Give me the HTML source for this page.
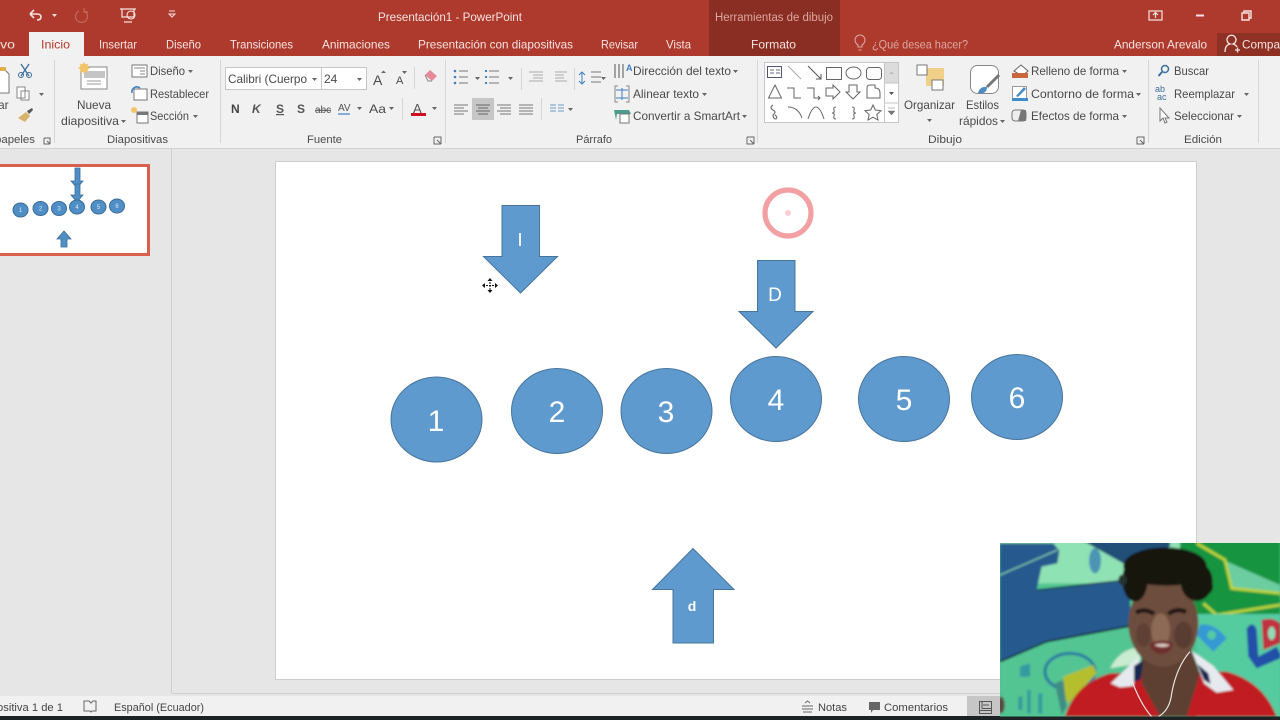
<!DOCTYPE html>
<html lang="es"><head><meta charset="utf-8"><title>Presentación1 - PowerPoint</title>
<style>
html,body{margin:0;padding:0;width:1280px;height:720px;overflow:hidden;background:#e6e6e6}
svg{display:block;font-family:"Liberation Sans",sans-serif;filter:blur(.3px)}
.t{font-size:12px;fill:#4a4a4a}
.w{font-size:12px;fill:#f6e3e0}
.i{fill:none;stroke:#666;stroke-width:1}
.c{fill:#4f8fc6;stroke:#3b6c96;stroke-width:1}
.n{fill:#fff;text-anchor:middle}
</style></head><body>
<svg width="1280" height="720" viewBox="0 0 1280 720" xmlns="http://www.w3.org/2000/svg">
<defs><filter id="b" x="-20%" y="-20%" width="140%" height="140%"><feGaussianBlur stdDeviation="3"/></filter><filter id="b2"><feGaussianBlur stdDeviation="0.35"/></filter></defs>
<!-- title bar -->
<rect width="1280" height="56" fill="#ad3a2d"/>
<rect x="709" width="131" height="56" fill="#8a2e23"/>
<rect x="1217" y="33" width="63" height="23" fill="#8e3024"/>
<rect x="29" y="32" width="55" height="24" fill="#f1f1f1"/>
<g fill="none" stroke="#f6e3e0" stroke-width="1.6">
<path d="M30 14 L34 10 M30 14 L34 18 M30 14 H37 Q41 14 41 17 Q41 20 37 20"/>
<path d="M52 14h5l-2.500 3z" fill="#f6e3e0" stroke="none"/>
<path d="M79 11 A6 6 0 1 0 84 11 M84 8 V12 H88" stroke="#c4685c" stroke-width="1.2"/>
<path d="M120 9 H136 M122 9 V17 H134 V9 M124 22 H132" stroke-width="1.2"/>
<circle cx="131" cy="15" r="4" stroke-width="1.1"/>
<path d="M169 11h6 M169 14h6l-3 3z" stroke-width="1"/>
<path d="M1149 11h13v9h-13z M1155.500 18v-5 M1153 15l2.500-2.500 2.500 2.500" stroke-width="1.2"/>
<path d="M1196 15.500h8" stroke-width="2"/>
<path d="M1242 13h7v7h-7z M1244 13v-2h7v7h-2" stroke-width="1.400"/>
</g>
<text x="378" y="21" class="w" textLength="144" lengthAdjust="spacingAndGlyphs">Presentación1 - PowerPoint</text>
<text x="715" y="21" font-size="11.500" fill="#dca79f" textLength="118" lengthAdjust="spacingAndGlyphs">Herramientas de dibujo</text>
<g class="w">
<text x="-3" y="48.500" textLength="18" lengthAdjust="spacingAndGlyphs">ivo</text>
<text x="99" y="48.500" textLength="38" lengthAdjust="spacingAndGlyphs">Insertar</text>
<text x="166" y="48.500" textLength="35" lengthAdjust="spacingAndGlyphs">Diseño</text>
<text x="230" y="48.500" textLength="63" lengthAdjust="spacingAndGlyphs">Transiciones</text>
<text x="322" y="48.500" textLength="68" lengthAdjust="spacingAndGlyphs">Animaciones</text>
<text x="418" y="48.500" textLength="155" lengthAdjust="spacingAndGlyphs">Presentación con diapositivas</text>
<text x="601" y="48.500" textLength="37" lengthAdjust="spacingAndGlyphs">Revisar</text>
<text x="666" y="48.500" textLength="25" lengthAdjust="spacingAndGlyphs">Vista</text>
<text x="751" y="48.500" textLength="45" lengthAdjust="spacingAndGlyphs">Formato</text>
<text x="1114" y="48.500" textLength="93" lengthAdjust="spacingAndGlyphs">Anderson Arevalo</text>
<text x="1242" y="48.500" textLength="38" lengthAdjust="spacingAndGlyphs">Compa</text>
</g>
<text x="41" y="48.500" font-size="12" fill="#b5392c" textLength="29" lengthAdjust="spacingAndGlyphs">Inicio</text>
<text x="872" y="48.500" font-size="12" fill="#dca79f" textLength="96" lengthAdjust="spacingAndGlyphs">¿Qué desea hacer?</text>
<path d="M858 47 V45 Q855 43 855 40 A5 5 0 0 1 865 40 Q865 43 862 45 V47 Z M858.500 50h3" fill="none" stroke="#dca79f" stroke-width="1.1"/>
<path d="M1225 52 Q1225 45 1230 44 A4.500 4.500 0 1 1 1233 44 Q1236 45 1237 47 M1235 50h5 M1237.500 47.500v5" fill="none" stroke="#f6e3e0" stroke-width="1.3"/>

<!-- ribbon -->
<rect y="56" width="1280" height="92" fill="#f1f1f1"/>
<rect y="148" width="1280" height="1" fill="#d2d2d2"/>
<g fill="#d6d6d6">
<rect x="54" y="60" width="1" height="83"/><rect x="220" y="60" width="1" height="83"/><rect x="445" y="60" width="1" height="83"/>
<rect x="757" y="60" width="1" height="83"/><rect x="1148" y="60" width="1" height="83"/><rect x="1258" y="60" width="1" height="83"/>
<rect x="521" y="68" width="1" height="22"/><rect x="574" y="68" width="1" height="22"/><rect x="414" y="67" width="1" height="22"/><rect x="402" y="98" width="1" height="22"/><rect x="541" y="98" width="1" height="22"/>
</g>
<!-- clipboard -->
<path d="M-1 70 H5 L9 74 V93 H-1" fill="#fff" stroke="#777"/><rect x="0" y="67" width="6" height="4" fill="#e0b050"/>
<path d="M21 64 L29 76 M29 64 L21 76" stroke="#3d6f9e" stroke-width="1.300"/><circle cx="21" cy="75" r="2.500" fill="none" stroke="#3d6f9e"/><circle cx="29" cy="75" r="2.500" fill="none" stroke="#3d6f9e"/>
<path d="M17 87h8v11h-8z M21 91h8v9h-8z" fill="#fff" stroke="#888"/><path d="M39 93h5l-2.500 3z" fill="#666"/>
<path d="M18 118 L26 112 L30 116 L25 122 Z" fill="#d9b36c"/><path d="M27 111l5-3 1 2-4 4z" fill="#555"/>
<text x="-2" y="109" class="t">ar</text>
<text x="-5" y="143" class="t" textLength="40" lengthAdjust="spacingAndGlyphs" style="font-size:11px">papeles</text>
<path d="M44 138h6v6 M44 138v6h6 M47 141l3 3" class="i" stroke-width=".8"/>
<!-- diapositivas -->
<rect x="81" y="67" width="26" height="22" fill="#fff" stroke="#888"/><rect x="84" y="71" width="21" height="7" fill="#c4c4c4"/>
<path d="M87 81h14M87 84h14" stroke="#999"/>
<circle cx="84" cy="68" r="4.500" fill="#f2c468"/><path d="M78 68h12M84 62v12M80 64l8 8M88 64l-8 8" stroke="#f2c468"/>
<text x="77" y="109" class="t" textLength="34" lengthAdjust="spacingAndGlyphs">Nueva</text>
<text x="61" y="125" class="t" textLength="58" lengthAdjust="spacingAndGlyphs">diapositiva</text>
<path d="M121 120h5l-2.500 3z" fill="#666"/>
<rect x="132" y="65" width="15" height="12" fill="#fff" stroke="#777"/><path d="M134 68h11M140 71h5M140 74h5" stroke="#888"/>
<text x="150" y="75" class="t" textLength="35" lengthAdjust="spacingAndGlyphs">Diseño</text><path d="M188 70h5l-2.500 3z" fill="#666"/>
<rect x="134" y="89" width="13" height="11" fill="#fff" stroke="#777"/><path d="M132 93 A5 5 0 0 1 140 88" fill="none" stroke="#3d7fbf" stroke-width="1.500"/>
<text x="150" y="98" class="t" textLength="59" lengthAdjust="spacingAndGlyphs">Restablecer</text>
<rect x="137" y="112" width="11" height="11" fill="#fff" stroke="#777"/><rect x="137" y="112" width="11" height="3" fill="#777"/><circle cx="134" cy="110" r="3" fill="#f2c468"/>
<text x="150" y="120" class="t" textLength="39" lengthAdjust="spacingAndGlyphs">Sección</text><path d="M193 115h5l-2.500 3z" fill="#666"/>
<text x="107" y="143" class="t" style="font-size:11px" textLength="61" lengthAdjust="spacingAndGlyphs">Diapositivas</text>
<!-- fuente -->
<rect x="225.500" y="67.500" width="141" height="22" fill="#fff" stroke="#c6c6c6"/><path d="M321.500 68v21" stroke="#c6c6c6"/>
<text x="228" y="83" class="t" textLength="79" lengthAdjust="spacingAndGlyphs">Calibri (Cuerpo</text><path d="M312 78h5l-2.500 3z" fill="#666"/>
<text x="324" y="83" class="t">24</text><path d="M357 78h5l-2.500 3z" fill="#666"/>
<text x="373" y="85" class="t" style="font-size:14px">A</text><path d="M381 73l2.500-2.500 2.500 2.500z" fill="#666"/>
<text x="396" y="84" class="t" style="font-size:11px">A</text><path d="M402 71h5l-2.500 3z" fill="#666"/>
<path d="M425 75l5-5 7 6-5 5z" fill="#e58a98"/><path d="M425 75l3 6 4 0" fill="none" stroke="#888"/>
<text x="231" y="113" style="font-size:12px;font-weight:700" fill="#444">N</text>
<text x="252" y="113" style="font-size:12px;font-weight:700;font-style:italic" fill="#555">K</text>
<text x="276" y="113" style="font-size:12px;font-weight:700;text-decoration:underline" fill="#555">S</text>
<text x="297" y="113" style="font-size:12px;font-weight:700" fill="#555">S</text>
<text x="315" y="113" style="font-size:10px;text-decoration:line-through" fill="#555">abc</text>
<text x="338" y="111" style="font-size:10px" fill="#555">AV</text><path d="M338 114h12" stroke="#3d7fbf" stroke-width="1.200"/><path d="M357 107h5l-2.500 3z" fill="#666"/>
<text x="369" y="113" class="t" textLength="17" lengthAdjust="spacingAndGlyphs">Aa</text><path d="M389 107h5l-2.500 3z" fill="#666"/>
<text x="413" y="113" style="font-size:13px" fill="#555">A</text><rect x="411" y="113" width="15" height="3" fill="#d01020"/><path d="M432 107h5l-2.500 3z" fill="#666"/>
<text x="307" y="143" class="t" style="font-size:11px" textLength="35" lengthAdjust="spacingAndGlyphs">Fuente</text>
<path d="M434 137h7v7 M434 137v7h7 M437 140l4 4" class="i" stroke-width=".8"/>
<!-- parrafo -->
<g stroke="#777">
<path d="M459 71h9M459 77h9M459 83h9M489 71h10M489 77h10M489 83h10"/>
<path d="M529 72h14M533 75h10M533 78h10M529 81h14M555 72h12M555 75h9M555 78h9M555 81h12" stroke="#aaa"/>
<path d="M591 72h10M591 77h10M591 82h10"/>
<path d="M454 105h14M454 108h10M454 111h14M454 114h10"/>
<path d="M497 105h14M500 108h11M497 111h14M500 114h11"/>
<path d="M519 105h14M519 108h14M519 111h14M519 114h14"/>
</g>
<rect x="472" y="98" width="22" height="22" fill="#c6c6c6"/>
<path d="M476 105h14M478 108h10M476 111h14M478 114h10" stroke="#666"/>
<g fill="#3d7fbf"><circle cx="455" cy="71" r="1.300"/><circle cx="455" cy="77" r="1.300"/><circle cx="455" cy="83" r="1.300"/><rect x="485" y="70" width="2" height="2"/><rect x="485" y="76" width="2" height="2"/><rect x="485" y="82" width="2" height="2"/></g>
<path d="M582 72v12M579 75l3-3 3 3M579 81l3 3 3-3" fill="none" stroke="#3d7fbf"/>
<g fill="#666"><path d="M475 77h5l-2.500 3zM508 77h5l-2.500 3zM601 77h5l-2.500 3zM568 108h5l-2.500 3z"/></g>
<path d="M550 105h6M550 108h6M550 111h6M558 105h6M558 108h6M558 111h6" stroke="#6a9ac9"/>
<path d="M615 64v14M619 64v14M623 64v14" stroke="#555"/><text x="626" y="71" style="font-size:9px;font-weight:700" fill="#3d7fbf">A</text>
<text x="633" y="75" class="t" textLength="98" lengthAdjust="spacingAndGlyphs">Dirección del texto</text><path d="M733 70h5l-2.500 3z" fill="#666"/>
<path d="M618 86h-3v16h3M626 86h3v16h-3" fill="none" stroke="#888"/><path d="M616 90h12M616 98h12M622 88v12" stroke="#3d7fbf"/>
<text x="633" y="98" class="t" textLength="66" lengthAdjust="spacingAndGlyphs">Alinear texto</text><path d="M702 93h5l-2.500 3z" fill="#666"/>
<path d="M614 110h15l2 4h-14l-1 6z" fill="#4f9c8c"/><rect x="620" y="114" width="9" height="9" fill="#fff" stroke="#777"/>
<text x="633" y="120" class="t" textLength="107" lengthAdjust="spacingAndGlyphs">Convertir a SmartArt</text><path d="M742 115h5l-2.500 3z" fill="#666"/>
<text x="576" y="143" class="t" style="font-size:11px" textLength="36" lengthAdjust="spacingAndGlyphs">Párrafo</text>
<path d="M747 137h7v7 M747 137v7h7 M750 140l4 4" class="i" stroke-width=".8"/>
<!-- shapes gallery -->
<rect x="764.500" y="62.500" width="134" height="60" fill="#fff" stroke="#c6c6c6"/>
<rect x="884" y="63" width="14" height="20" fill="#dcdcdc"/><path d="M884.500 63v59M884 83h14M884 103h14" stroke="#c6c6c6"/>
<path d="M889 74l2.500-2.500 2.500 2.500z" fill="#bbb"/><path d="M889 92h5l-2.500 3z" fill="#555"/><path d="M888 108h7M888 111h7l-3.500 4z" fill="#777" stroke="#777" stroke-width=".5"/>
<g fill="none" stroke="#666" stroke-width="1">
<rect x="767.500" y="66.500" width="14" height="11" stroke="#557"/><path d="M770 70h4M770 73h4M776 70h4M776 73h4" stroke="#668"/>
<path d="M788 66l13 13" stroke="#aaa"/><path d="M808 66l13 13M821 74v5h-5" stroke="#555"/>
<rect x="826.500" y="67.500" width="15" height="12"/><ellipse cx="853.500" cy="73" rx="7.500" ry="6"/><rect x="866.500" y="67.500" width="15" height="12" rx="3"/>
<path d="M775 85l6.500 13h-13z"/><path d="M787 88h7v10h7"/><path d="M807 88h7v10h6M818 96l2 2-2 2"/>
<path d="M826 88h7v-3l7 7-7 7v-3h-7z"/><path d="M849 85h8v7h3l-7 7-7-7h3z"/><path d="M867 98V88q0-3 3-3h5v3q5 0 5 5v5z"/>
<path d="M773 105q-4 3 0 5t0 5q0 4 3 4q2-2-1-4" stroke-width="1.100"/><path d="M788 107q10 0 14 11"/><path d="M808 119q4-12 8-12t8 12"/>
<path d="M836 107q-3 0-2 3t-2 3q3 0 2 3t2 3" stroke-width="1.100"/><path d="M852 107q3 0 2 3t2 3q-3 0-2 3t-2 3" stroke-width="1.100"/>
<path d="M873 105l2.300 5 5.700 .7-4.200 3.800 1.200 5.500-5-2.800-5 2.800 1.200-5.500-4.200-3.800 5.700-.7z"/>
</g>
<!-- organizar etc -->
<rect x="926" y="68" width="18" height="18" fill="#f0cf88"/><rect x="917" y="65" width="10" height="10" fill="#fff" stroke="#777"/><rect x="932" y="80" width="11" height="10" fill="#fff" stroke="#777"/>
<text x="904" y="109" class="t" textLength="51" lengthAdjust="spacingAndGlyphs">Organizar</text><path d="M927 119h5l-2.500 3z" fill="#666"/>
<rect x="970.500" y="65.500" width="28" height="28" rx="7" fill="#fff" stroke="#888"/><path d="M999 75 L987 87" stroke="#777" stroke-width="3"/><path d="M978 93q2-7 9-6q0 5-4 6z" fill="#4a8cc4"/>
<text x="966" y="109" class="t" textLength="33" lengthAdjust="spacingAndGlyphs">Estilos</text>
<text x="959" y="125" class="t" textLength="39" lengthAdjust="spacingAndGlyphs">rápidos</text><path d="M1000 120h5l-2.500 3z" fill="#666"/>
<path d="M1014 71l7-6 7 6-6 5z" fill="#fff" stroke="#666"/><rect x="1012" y="73" width="16" height="5" fill="#c8683c"/>
<text x="1031" y="75" class="t" textLength="88" lengthAdjust="spacingAndGlyphs">Relleno de forma</text><path d="M1122 70h5l-2.500 3z" fill="#666"/>
<path d="M1012.500 86.500h14v13h-14z" fill="#fff" stroke="#999"/><path d="M1016 96l8-9 2 2-8 8z" fill="#4a8cc4"/><rect x="1012" y="98" width="16" height="3" fill="#3d8ccc"/>
<text x="1031" y="98" class="t" textLength="103" lengthAdjust="spacingAndGlyphs">Contorno de forma</text><path d="M1136 93h5l-2.500 3z" fill="#666"/>
<rect x="1012" y="110" width="14" height="11" rx="3" fill="#eee" stroke="#777"/><path d="M1021 110h5v11h-8z" fill="#777"/>
<text x="1031" y="120" class="t" textLength="88" lengthAdjust="spacingAndGlyphs">Efectos de forma</text><path d="M1122 115h5l-2.500 3z" fill="#666"/>
<text x="928" y="143" class="t" style="font-size:11px" textLength="34" lengthAdjust="spacingAndGlyphs">Dibujo</text>
<path d="M1137 137h7v7 M1137 137v7h7 M1140 140l4 4" class="i" stroke-width=".8"/>
<!-- edicion -->
<circle cx="1165" cy="69" r="3.500" fill="none" stroke="#3d6f9e" stroke-width="1.500"/><path d="M1162 72l-3.500 4" stroke="#3d6f9e" stroke-width="2"/>
<text x="1174" y="75" class="t" textLength="35" lengthAdjust="spacingAndGlyphs">Buscar</text>
<text x="1155" y="92" style="font-size:9px" fill="#3d6f9e">ab</text><text x="1157" y="100" style="font-size:9px" fill="#3d6f9e">ac</text>
<text x="1174" y="98" class="t" textLength="61" lengthAdjust="spacingAndGlyphs">Reemplazar</text><path d="M1244 93h5l-2.500 3z" fill="#666"/>
<path d="M1160 108v13l3-3 2 5 2-1-2-4h4z" fill="#fff" stroke="#777"/>
<text x="1174" y="120" class="t" textLength="60" lengthAdjust="spacingAndGlyphs">Seleccionar</text><path d="M1237 115h5l-2.500 3z" fill="#666"/>
<text x="1184" y="143" class="t" style="font-size:11px" textLength="38" lengthAdjust="spacingAndGlyphs">Edición</text>

<!-- workspace -->
<rect y="149" width="1280" height="547" fill="#e6e6e6"/>
<rect x="171" y="149" width="1" height="544" fill="#cfcfcf"/>
<rect x="172" y="693" width="830" height="1" fill="#cfcfcf"/>
<!-- thumbnail -->
<rect x="-4" y="165.500" width="152.500" height="89" fill="#fff" stroke="#d9604d" stroke-width="3"/>
<g filter="url(#b2)">
<path d="M75 168h5v13h3l-6 7-6-7h4z" fill="#4f8fc6" stroke="#3b6c96" stroke-width=".8"/>
<path d="M75 184h5v11h3l-6 7-6-7h4z" fill="#4f8fc6" stroke="#3b6c96" stroke-width=".8"/>
<path d="M64 231l7 8h-4v8h-6v-8h-4z" fill="#4f8fc6" stroke="#3b6c96" stroke-width=".8"/>
<ellipse class="c" cx="20.500" cy="210" rx="7.500" ry="7"/><ellipse class="c" cx="40.500" cy="208.500" rx="7.500" ry="7"/><ellipse class="c" cx="59" cy="208.500" rx="7.500" ry="7"/><ellipse class="c" cx="77" cy="207" rx="7.500" ry="7"/><ellipse class="c" cx="98.500" cy="207" rx="7.500" ry="7"/><ellipse class="c" cx="117" cy="206" rx="7.500" ry="7"/>
<g fill="#dbe9f6" font-size="6" text-anchor="middle"><text x="20.500" y="212">1</text><text x="40.500" y="210.500">2</text><text x="59" y="210.500">3</text><text x="77" y="209">4</text><text x="98.500" y="209">5</text><text x="117" y="208">6</text></g>
</g>
<!-- slide -->
<rect x="275.500" y="161.500" width="921" height="518" fill="#fff" stroke="#cdcdcd"/>
<g fill="#5e9acd" stroke="#47749c" stroke-width="1">
<path d="M502 205.500h37.500v51h18l-37 36.500-37-36.500h18.500z"/>
<path d="M757.500 260.500h37.500v51h18l-37 36.500-37-36.500h18.500z"/>
<path d="M693 548.500l41 41h-20.500v53.500h-40.500v-53.500h-20.500z"/>
<ellipse cx="436.500" cy="419.500" rx="45.500" ry="42.500"/><ellipse cx="557" cy="411" rx="45.500" ry="42.500"/><ellipse cx="666.500" cy="411" rx="45.500" ry="42.500"/><ellipse cx="776" cy="399" rx="45.500" ry="42.500"/><ellipse cx="904" cy="399" rx="45.500" ry="42.500"/><ellipse cx="1017" cy="397" rx="45.500" ry="42.500"/>
</g>
<g>
<text x="436" y="431" class="n" style="font-size:30px">1</text><text x="557" y="422" class="n" style="font-size:30px">2</text><text x="666" y="422" class="n" style="font-size:30px">3</text><text x="776" y="410" class="n" style="font-size:30px">4</text><text x="904" y="410" class="n" style="font-size:30px">5</text><text x="1017" y="408" class="n" style="font-size:30px">6</text>
<text x="520" y="246" class="n" style="font-size:18px">I</text><text x="775" y="301" class="n" style="font-size:19px">D</text><text x="692" y="611" class="n" style="font-size:14px;font-weight:700">d</text>
</g>
<circle cx="788" cy="213" r="23" fill="#fff" stroke="#f2a0a3" stroke-width="5.200"/><circle cx="788" cy="213" r="3" fill="#f8cfd2"/>
<g stroke="#111" fill="#111"><path d="M483 285.500h14M490 279v13" stroke-width="1" stroke-dasharray="2 1"/><path d="M482 285.500l3-2.500v5zM498 285.500l-3-2.500v5zM490 278l-2.500 3h5zM490 293l-2.500-3h5z" stroke="none"/></g>
<!-- status -->
<rect y="696" width="1280" height="20" fill="#f1f1f1"/>
<rect y="716" width="1280" height="4" fill="#1d2225"/>
<text x="-3" y="711" style="font-size:11px" fill="#444" textLength="66" lengthAdjust="spacingAndGlyphs">ositiva 1 de 1</text>
<path d="M84 701h5l2 2 2-2h3v10h-4l-1 1-1-1h-6z" fill="none" stroke="#666"/>
<text x="114" y="711" style="font-size:11px" fill="#444" textLength="90" lengthAdjust="spacingAndGlyphs">Español (Ecuador)</text>
<path d="M802 706h11M802 709h11M803 712h9M805 703l2.500-2 2.500 2" stroke="#666" fill="none"/>
<text x="818" y="711" style="font-size:11px" fill="#444" textLength="29" lengthAdjust="spacingAndGlyphs">Notas</text>
<path d="M869 702h11v8h-7l-2 3v-3h-2z" fill="#666"/>
<text x="884" y="711" style="font-size:11px" fill="#444" textLength="64" lengthAdjust="spacingAndGlyphs">Comentarios</text>
<rect x="967" y="696" width="33" height="20" fill="#c6c6c6"/>
<path d="M979.500 701.500h12v12h-12zM982 701.500v7h9.500M983 705h6M979.500 710.500h12" fill="none" stroke="#555"/>
<!-- webcam -->
<clipPath id="cam"><rect x="1000" y="543" width="280" height="173.500"/></clipPath>
<g clip-path="url(#cam)"><g transform="translate(1000 540) scale(.33333)">
<rect y="0" width="840" height="540" fill="#4fc08f"/>
<g filter="url(#b)">
<!-- background -->
<rect x="0" y="0" width="560" height="540" fill="#53c592"/>
<rect x="540" y="0" width="300" height="225" fill="#129440"/>
<path d="M670 60 L840 135 V160 L695 145 Z" fill="#6ccda0"/>
<path d="M590 10 L675 60 L695 145 L840 160 M610 190 L650 225 L840 195" fill="none" stroke="#b7d23e" stroke-width="9"/>
<rect x="590" y="222" width="250" height="310" fill="#55cba0"/>
<path d="M0 0 H540 V130 H0 Z" fill="#8fe2b4"/>
<path d="M245 0 H510 V20 L400 65 L370 70 Z" fill="#234f78"/>
<path d="M0 10 H160 L178 32 L172 70 L125 80 L110 150 L385 122 L395 258 L140 305 L0 365 Z" fill="#255a8e"/>
<path d="M0 105 L172 30" stroke="#8fdcb4" stroke-width="3"/>
<path d="M0 365 L140 305 L390 258" fill="none" stroke="#0e2436" stroke-width="5"/>
<path d="M110 150 L380 120" stroke="#0e2436" stroke-width="4"/>
<ellipse cx="285" cy="62" rx="18" ry="38" fill="#4c94b4"/>
<ellipse cx="210" cy="395" rx="75" ry="55" fill="none" stroke="#2a7aa2" stroke-width="9"/>
<path d="M190 410 L280 375 L290 400 L205 490 L190 470 Z" fill="#b5bf2e"/>
<path d="M165 430 L190 420 L200 500 L185 525 Z" fill="#3f8c84"/>
<path d="M60 380l30-10v40h-30zM55 470h12v40H55zM82 450h10v70H82zM115 460h12v60h-12z" fill="#339aa0"/>
<ellipse cx="4" cy="495" rx="10" ry="25" fill="#5b4a40"/>
<path d="M330 385 Q360 325 420 322 L420 370 Z" fill="#c9ebd0"/>
<path d="M600 255 Q640 245 680 295 L640 335 L590 285 Z" fill="#3699d2"/><ellipse cx="635" cy="285" rx="13" ry="14" fill="#55cba0"/>
<path d="M740 265 Q760 240 770 270 L775 350 L830 320 L840 340 V355 L770 385 L745 350 Z" fill="#2350a8"/>
<path d="M785 240 Q820 230 840 250 V310 L790 330 Z" fill="#c0323f"/><ellipse cx="815" cy="280" rx="11" ry="20" fill="#8fdcb8"/>
<!-- shirt -->
<path d="M195 530 Q225 430 330 400 L680 395 Q790 425 830 530 Z" fill="#c01a24"/>
<!-- neck -->
<path d="M425 330 L570 320 L600 400 L560 530 L480 530 L425 430 Z" fill="#5d3f33"/>
<!-- collar -->
<path d="M332 430 Q370 395 420 345 L400 438 L360 442 Z" fill="#e6eaef"/>
<path d="M575 332 L640 378 L700 450 L650 458 L612 430 L590 370 Z" fill="#e6eaef"/>
<path d="M402 378 L430 360 L422 420 L402 425 Z" fill="#16264f"/><path d="M592 372 L625 400 L632 432 L612 420 Z" fill="#16264f"/>
<!-- face -->
<ellipse cx="490" cy="250" rx="105" ry="130" fill="#6d4d3e"/>
<ellipse cx="482" cy="270" rx="28" ry="50" fill="#8d6a54"/>
<ellipse cx="430" cy="285" rx="22" ry="35" fill="#5f4135"/><ellipse cx="550" cy="285" rx="28" ry="40" fill="#5a3e33"/>
<path d="M408 218 Q435 203 462 222 M505 222 Q530 203 558 216" fill="none" stroke="#241712" stroke-width="13"/>
<path d="M448 312 Q485 293 520 310 Q515 342 480 342 Q455 336 448 312Z" fill="#6e2e2e"/><path d="M462 315 Q485 306 510 315 Q490 328 462 315Z" fill="#d8c6bb"/>
<!-- hair -->
<g fill="#17120f"><ellipse cx="495" cy="78" rx="125" ry="56"/><ellipse cx="590" cy="125" rx="48" ry="58"/><ellipse cx="405" cy="120" rx="38" ry="65"/><ellipse cx="500" cy="112" rx="105" ry="25"/><ellipse cx="615" cy="140" rx="24" ry="25"/></g>
<ellipse cx="368" cy="120" rx="13" ry="16" fill="#27312e"/>
</g>
<g fill="none" stroke="#ece6e0" stroke-width="3.500" filter="url(#b2)"><path d="M395 420 Q420 490 455 530"/><path d="M570 335 Q530 380 515 460 Q510 510 475 530"/></g>
</g></g>
</svg>
</body></html>
